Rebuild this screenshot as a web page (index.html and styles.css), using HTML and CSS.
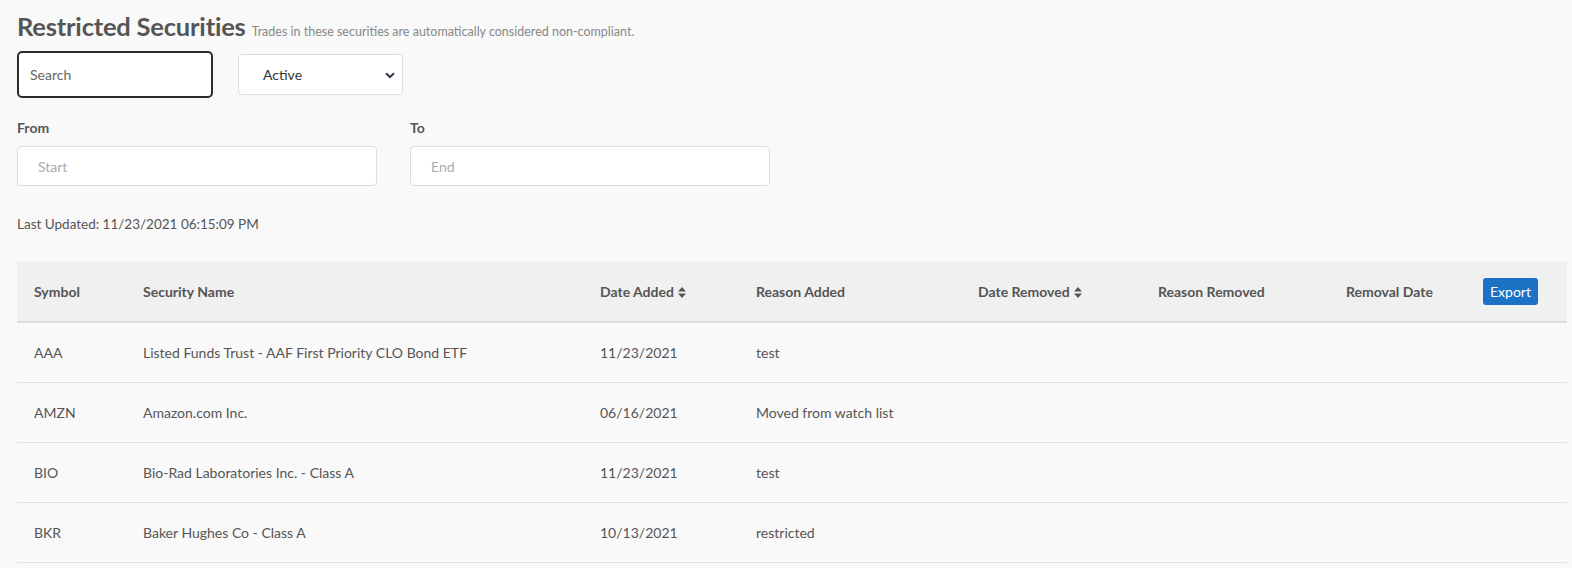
FILE: index.html
```html
<!DOCTYPE html>
<html lang="en">
    <head>
        <meta charset="UTF-8" />
        <meta name="viewport" content="width=device-width, initial-scale=1.0" />
        <title>Restricted Securities</title>
        <link rel="stylesheet" href="styles.css">
    </head>
    <body>
        <main class="page">
            <header class="page-head">
                <h1>Restricted Securities</h1>
                <small>Trades in these securities are automatically considered non-compliant.</small>
            </header>

            <div class="filters">
                <input type="text" class="search" placeholder="Search" />
                <div class="select-wrap">
                    <select class="status">
                        <option>Active</option>
                        <option>Removed</option>
                        <option>All</option>
                    </select>
                    <svg class="chevron" width="10" height="7" viewBox="0 0 10 7">
                        <path d="M1 1.2 L5 5 L9 1.2" fill="none" stroke="#3a3a4a" stroke-width="2" />
                    </svg>
                </div>
            </div>

            <div class="dates">
                <div class="date-field">
                    <label for="start">From</label>
                    <input type="text" id="start" placeholder="Start" />
                </div>
                <div class="date-field">
                    <label for="end">To</label>
                    <input type="text" id="end" placeholder="End" />
                </div>
            </div>

            <p class="updated">Last Updated: 11/23/2021 06:15:09 PM</p>

            <table class="list">
                <thead>
                    <tr>
                        <th class="c-symbol">Symbol</th>
                        <th class="c-name">Security Name</th>
                        <th class="c-added">Date Added <svg class="sort" width="8" height="11" viewBox="0 0 8 11"><path d="M4 0 L8 4.4 H0 Z M0 6.6 H8 L4 11 Z" fill="#555" /></svg></th>
                        <th class="c-reason">Reason Added</th>
                        <th class="c-removed">Date Removed <svg class="sort" width="8" height="11" viewBox="0 0 8 11"><path d="M4 0 L8 4.4 H0 Z M0 6.6 H8 L4 11 Z" fill="#555" /></svg></th>
                        <th class="c-rreason">Reason Removed</th>
                        <th class="c-rdate">Removal Date</th>
                        <th class="c-export"><button type="button" class="export">Export</button></th>
                    </tr>
                </thead>
                <tbody>
                    <tr>
                        <td>AAA</td>
                        <td>Listed Funds Trust - AAF First Priority CLO Bond ETF</td>
                        <td>11/23/2021</td>
                        <td>test</td>
                        <td></td>
                        <td></td>
                        <td></td>
                        <td></td>
                    </tr>
                    <tr>
                        <td>AMZN</td>
                        <td>Amazon.com Inc.</td>
                        <td>06/16/2021</td>
                        <td>Moved from watch list</td>
                        <td></td>
                        <td></td>
                        <td></td>
                        <td></td>
                    </tr>
                    <tr>
                        <td>BIO</td>
                        <td>Bio-Rad Laboratories Inc. - Class A</td>
                        <td>11/23/2021</td>
                        <td>test</td>
                        <td></td>
                        <td></td>
                        <td></td>
                        <td></td>
                    </tr>
                    <tr>
                        <td>BKR</td>
                        <td>Baker Hughes Co - Class A</td>
                        <td>10/13/2021</td>
                        <td>restricted</td>
                        <td></td>
                        <td></td>
                        <td></td>
                        <td></td>
                    </tr>
                </tbody>
            </table>
        </main>
    </body>
</html>
```

FILE: styles.css
```css
* {
    padding: 0;
    margin: 0;
    box-sizing: border-box;
}
body {
    background-color: #f9f9f9;
    font-family: Lato, "Noto Sans", sans-serif;
    color: #555;
    font-size: 14px;
}
.page {
    padding: 11px 5px 0 17px;
}

.page-head {
    display: flex;
    align-items: baseline;
    gap: 6px;
}
.page-head h1 {
    font-size: 25.5px;
    font-weight: 700;
    color: #555;
    letter-spacing: -0.2px;
}
.page-head small {
    font-size: 12.5px;
    color: #888;
}

.filters {
    display: flex;
    align-items: center;
    gap: 25px;
    margin-top: 10px;
}
.search {
    width: 196px;
    height: 47px;
    border: 2px solid #2b2b2b;
    border-radius: 5px;
    padding: 0 11px;
    font-family: inherit;
    font-size: 14px;
    background-color: #fff;
    outline: none;
}
.search::placeholder {
    color: #666;
}
.select-wrap {
    position: relative;
}
.status {
    appearance: none;
    width: 165px;
    height: 41px;
    border: 1px solid #ddd;
    border-radius: 4px;
    background-color: #fff;
    padding: 0 24px;
    font-family: inherit;
    font-size: 14px;
    color: #333;
}
.chevron {
    position: absolute;
    right: 8px;
    top: 18px;
    pointer-events: none;
}

.dates {
    display: flex;
    gap: 33px;
    margin-top: 21px;
}
.date-field {
    display: flex;
    flex-direction: column;
    width: 360px;
}
.date-field label {
    font-size: 14px;
    font-weight: 700;
    color: #555;
    margin-bottom: 10px;
}
.date-field input {
    height: 40px;
    border: 1px solid #ddd;
    border-radius: 4px;
    background-color: #fff;
    padding: 0 20px;
    font-family: inherit;
    font-size: 14px;
    outline: none;
}
.date-field input::placeholder {
    color: #a8acb8;
}

.updated {
    margin-top: 30px;
    font-size: 13.5px;
    color: #555;
}

.list {
    width: 1550px;
    margin-top: 29px;
    border-collapse: collapse;
    table-layout: fixed;
}
.list th,
.list td {
    text-align: left;
    padding: 0 0 0 17px;
    white-space: nowrap;
}
.list thead tr {
    background-color: #f0f0f0;
    height: 61px;
    border-bottom: 2px solid #ddd;
}
.list th {
    font-weight: 700;
    font-size: 14px;
    color: #555;
}
.list tbody tr {
    height: 60px;
    border-bottom: 1px solid #e2e2e2;
}
.list td {
    font-size: 14px;
    color: #555;
}
.sort {
    vertical-align: -1px;
    margin-left: 1px;
}
.c-symbol { width: 109px; }
.c-name { width: 457px; }
.c-added { width: 156px; }
.c-reason { width: 222px; }
.c-removed { width: 180px; }
.c-rreason { width: 188px; }
.c-rdate { width: 137px; }
.c-export { width: 101px; }

.export {
    background-color: #1b72c4;
    color: #fff;
    border: none;
    border-radius: 3px;
    padding: 5px 7px;
    font-family: inherit;
    font-size: 14px;
}
```
